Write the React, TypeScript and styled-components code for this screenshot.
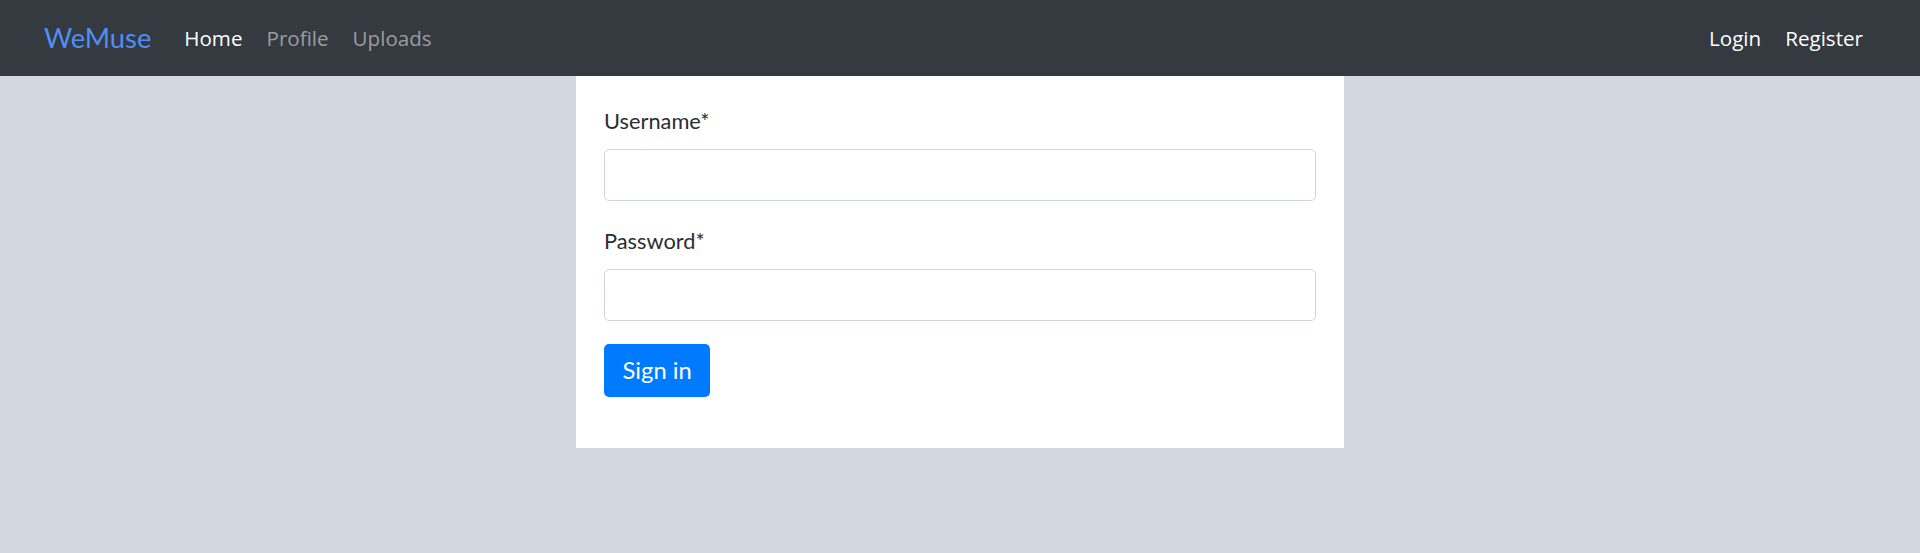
import React from "react";
import styled, { createGlobalStyle } from "styled-components";

const GlobalStyle = createGlobalStyle`
  html, body {
    margin: 0;
    padding: 0;
    background: #d3d7df;
    font-family: "Open Sans", "Noto Sans", sans-serif;
  }
  * { box-sizing: border-box; }
`;

const Page = styled.div`
  min-height: 553px;
  background: #d3d7df;
`;

const NavBar = styled.nav`
  height: 76px;
  background: #343a40;
  display: flex;
  align-items: center;
  padding: 0 45px 0 44px;
`;

const Brand = styled.a`
  font-family: "Lato", sans-serif;
  font-size: 27.3px;
  color: #4f8ef5;
  text-decoration: none;
  margin-right: 21px;
  line-height: 1;
  margin-top: -1px;
`;

const NavList = styled.div<{ $right?: boolean }>`
  display: flex;
  align-items: center;
  margin-left: ${(p) => (p.$right ? "auto" : "0")};
`;

const NavLink = styled.a<{ $active?: boolean }>`
  font-size: 20.6px;
  padding: 0 12px;
  line-height: 30px;
  color: ${(p) => (p.$active ? "#ffffff" : "rgba(255,255,255,0.5)")};
  text-decoration: none;
`;

const Main = styled.main`
  display: flex;
  justify-content: center;
`;

const Card = styled.form`
  width: 768px;
  background: #ffffff;
  padding: 28px 28px 51px;
  font-family: "Lato", sans-serif;
`;

const Group = styled.div`
  margin-bottom: 23px;
`;

const Label = styled.label`
  display: block;
  font-size: 21.8px;
  line-height: 34px;
  color: #2a2e33;
  margin-bottom: 11px;
`;

const Input = styled.input`
  display: block;
  width: 100%;
  height: 52px;
  border: 1.25px solid #ced4da;
  border-radius: 5px;
  background: #fff;
  padding: 0 15px;
  font-size: 20px;
  outline: none;
`;

const Button = styled.button`
  height: 53px;
  padding: 0 18.5px;
  background: #007bff;
  border: none;
  border-radius: 5px;
  color: #ffffff;
  font-family: "Lato", sans-serif;
  font-size: 23.8px;
  line-height: 1;
  cursor: pointer;
`;

export default function App() {
  return (
    <Page>
      <GlobalStyle />
      <NavBar>
        <Brand href="#">WeMuse</Brand>
        <NavList>
          <NavLink $active href="#">Home</NavLink>
          <NavLink href="#">Profile</NavLink>
          <NavLink href="#">Uploads</NavLink>
        </NavList>
        <NavList $right>
          <NavLink $active href="#">Login</NavLink>
          <NavLink $active href="#">Register</NavLink>
        </NavList>
      </NavBar>
      <Main>
        <Card onSubmit={(e) => e.preventDefault()}>
          <Group>
            <Label htmlFor="username">Username*</Label>
            <Input id="username" type="text" />
          </Group>
          <Group>
            <Label htmlFor="password">Password*</Label>
            <Input id="password" type="password" />
          </Group>
          <Button type="submit">Sign in</Button>
        </Card>
      </Main>
    </Page>
  );
}
